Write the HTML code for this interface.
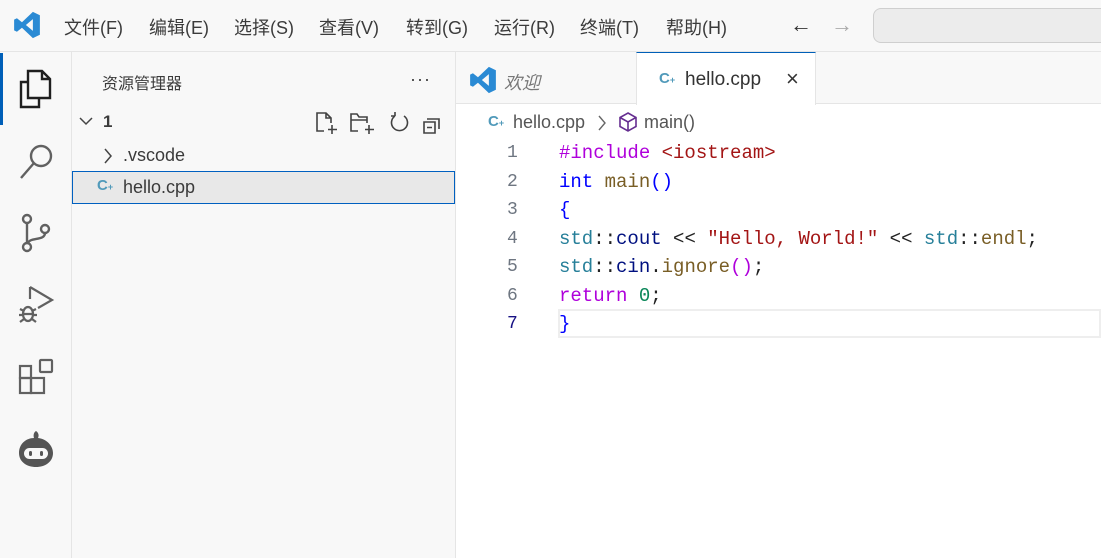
<!DOCTYPE html>
<html><head><meta charset="utf-8"><style>
*{margin:0;padding:0;box-sizing:border-box}
body{width:1101px;height:558px;overflow:hidden;background:#fff;font-family:"Liberation Sans","Noto Sans CJK SC",sans-serif;position:relative;color:#3b3b3b}
.abs{position:absolute}
#title{left:0;top:0;width:1101px;height:52px;background:#f8f8f8;border-bottom:1px solid #e5e5e5}
.menu{top:14px;font-size:18px;color:#3b3b3b}
#act{left:0;top:52px;width:72px;height:506px;background:#f8f8f8;border-right:1px solid #e5e5e5}
#side{left:72px;top:52px;width:384px;height:506px;background:#f8f8f8;border-right:1px solid #e5e5e5}
#tabs{left:456px;top:52px;width:645px;height:52px;background:#f8f8f8;border-bottom:1px solid #e5e5e5}
.code{font-family:"Liberation Mono",monospace;font-size:19px;left:559px;white-space:pre;color:#222}
.ln{font-family:"Liberation Mono",monospace;font-size:18px;left:507px;color:#6e7681}
.k{color:#af00db}.t{color:#0000ff}.f{color:#795e26}.s{color:#a31515}.n{color:#267f99}.v{color:#001080}.g{color:#098658}
</style></head><body>
<div id="title" class="abs"></div>
<svg class="abs" style="left:13px;top:11px" width="28" height="28" viewBox="0 0 100 100"><path d="M71 3 L96 15 V85 L71 97 L32 60 L14 74 L4 69 V31 L14 26 L32 40 Z M71 29 L46 50 L71 71 Z" fill="#2a8ad4" fill-rule="evenodd"/></svg>
<div class="abs menu" style="left:64px">文件(F)</div>
<div class="abs menu" style="left:149px">编辑(E)</div>
<div class="abs menu" style="left:234px">选择(S)</div>
<div class="abs menu" style="left:319px">查看(V)</div>
<div class="abs menu" style="left:406px">转到(G)</div>
<div class="abs menu" style="left:494px">运行(R)</div>
<div class="abs menu" style="left:580px">终端(T)</div>
<div class="abs menu" style="left:666px">帮助(H)</div>
<div class="abs" style="left:790px;top:12px;font-size:22px;color:#333">←</div>
<div class="abs" style="left:831px;top:12px;font-size:22px;color:#aaa">→</div>
<div class="abs" style="left:873px;top:8px;width:240px;height:35px;background:#ececec;border:1px solid #cfcfcf;border-radius:8px"></div>

<div id="act" class="abs"></div>
<div class="abs" style="left:0;top:53px;width:3px;height:72px;background:#005fb8"></div>
<svg class="abs" style="left:18px;top:68px" width="36" height="42" viewBox="0 0 36 42" fill="none" stroke="#1f1f1f" stroke-width="2.4"><path d="M10 3 H24 L32 11 V30 H10 Z M24 3 V11 H32"/><path d="M10 14 H3 V39 H21 V30"/></svg>
<svg class="abs" style="left:18px;top:142px" width="38" height="38" viewBox="0 0 38 38" fill="none" stroke="#616161" stroke-width="2.4"><circle cx="23" cy="14" r="10"/><path d="M16 21 L3 36"/></svg>
<svg class="abs" style="left:18px;top:213px" width="36" height="40" viewBox="0 0 36 40" fill="none" stroke="#616161" stroke-width="2.4"><circle cx="9" cy="6" r="4"/><circle cx="9" cy="34" r="4"/><circle cx="27" cy="16" r="4"/><path d="M9 10 V30 M27 20 C27 28 12 24 10 30"/></svg>
<svg class="abs" style="left:16px;top:285px" width="40" height="40" viewBox="0 0 40 40" fill="none" stroke="#616161" stroke-width="2.2"><path d="M14 2 L36 15 L22 23"/><path d="M14 2 V14"/><ellipse cx="12" cy="29" rx="5" ry="7"/><path d="M4 24 L8 26 M20 24 L16 26 M3 30 H7 M17 30 H21 M4 37 L8 34 M20 37 L16 34 M7 29 H17"/></svg>
<svg class="abs" style="left:18px;top:358px" width="36" height="38" viewBox="0 0 36 38" fill="none" stroke="#616161" stroke-width="2.2"><rect x="2" y="8" width="11" height="12"/><rect x="2" y="20" width="11" height="15"/><rect x="13" y="20" width="13" height="15"/><rect x="22" y="2" width="12" height="12" rx="1"/></svg>
<svg class="abs" style="left:17px;top:429px" width="38" height="40" viewBox="0 0 38 40"><path d="M19 2 C22 4 22 7 21 9 C30 10 36 17 36 24 C36 33 28 38 19 38 C10 38 2 33 2 24 C2 15 9 9 17 9 C16 6 17 3 19 2 Z" fill="#555"/><rect x="7" y="19" width="24" height="11" rx="5.5" fill="#f8f8f8"/><rect x="12" y="22" width="3" height="5" rx="1.5" fill="#555"/><rect x="23" y="22" width="3" height="5" rx="1.5" fill="#555"/></svg>

<div id="side" class="abs"></div>
<div class="abs" style="left:102px;top:70px;font-size:16px;color:#3b3b3b">资源管理器</div>
<div class="abs" style="left:410px;top:69px;font-size:18px;letter-spacing:1px">···</div>
<svg class="abs" style="left:79px;top:116px" width="14" height="10" viewBox="0 0 14 10" fill="none" stroke="#444" stroke-width="1.5"><path d="M1 2 L7 8 L13 2"/></svg>
<div class="abs" style="left:103px;top:112px;font-size:17px;font-weight:bold">1</div>
<svg class="abs" style="left:314px;top:110px" width="130" height="26" viewBox="0 0 130 26" fill="none" stroke="#424242" stroke-width="1.6"><path d="M10 21 H3 V3 H12 L17 8 V13 M12 3 V8 H17 M18 15 V24 M14 19.5 H23"/><path d="M44 21 H37 V4 H43 L45 7 H53 V13 M37 10 H53 M55 15 V24 M51 19.5 H60"/><path d="M90 6 A8 8 0 1 1 81 6 M81 6 V2 M81 6 H77"/><path d="M113 9 H125 V19 M110 12 H121 V23 H110 Z M113 17.5 H118"/></svg>
<svg class="abs" style="left:103px;top:148px" width="10" height="16" viewBox="0 0 10 16" fill="none" stroke="#444" stroke-width="1.5"><path d="M2 1 L8 8 L2 15"/></svg>
<div class="abs" style="left:123px;top:145px;font-size:18px">.vscode</div>
<div class="abs" style="left:72px;top:171px;width:383px;height:33px;border:1px solid #0060c0;background:#e8e8e8"></div>
<div class="abs" style="left:97px;top:177px;font-size:15px;font-weight:bold;color:#519aba">C<span style="font-size:9px">+</span></div>
<div class="abs" style="left:123px;top:177px;font-size:18px">hello.cpp</div>

<div id="tabs" class="abs"></div>
<svg class="abs" style="left:469px;top:66px" width="28" height="28" viewBox="0 0 100 100"><path d="M71 3 L96 15 V85 L71 97 L32 60 L14 74 L4 69 V31 L14 26 L32 40 Z M71 29 L46 50 L71 71 Z" fill="#2a8ad4" fill-rule="evenodd"/></svg>
<div class="abs" style="left:504px;top:69px;font-size:18px;font-style:italic;color:#777">欢迎</div>
<div class="abs" style="left:636px;top:52px;width:180px;height:53px;background:#fff;border-top:1px solid #005fb8;border-right:1px solid #e5e5e5;border-left:1px solid #e5e5e5"></div>
<div class="abs" style="left:659px;top:70px;font-size:15px;font-weight:bold;color:#519aba">C<span style="font-size:9px">+</span></div>
<div class="abs" style="left:685px;top:69px;font-size:19px;color:#333">hello.cpp</div>
<div class="abs" style="left:786px;top:66px;font-size:22px;color:#333">×</div>

<div class="abs" style="left:488px;top:113px;font-size:15px;font-weight:bold;color:#519aba">C<span style="font-size:9px">+</span></div>
<div class="abs" style="left:513px;top:112px;font-size:18px;color:#555">hello.cpp</div>
<svg class="abs" style="left:597px;top:115px" width="10" height="16" viewBox="0 0 10 16" fill="none" stroke="#666" stroke-width="1.4"><path d="M2 1 L8 8 L2 15"/></svg>
<svg class="abs" style="left:617px;top:111px" width="22" height="22" viewBox="0 0 22 22" fill="none" stroke="#652d90" stroke-width="1.6"><path d="M11 2 L19 6.5 V15.5 L11 20 L3 15.5 V6.5 Z M3 6.5 L11 11 L19 6.5 M11 11 V20"/></svg>
<div class="abs" style="left:644px;top:112px;font-size:18px;color:#555">main()</div>

<div class="abs" style="left:558px;top:309px;width:543px;height:29px;border:2px solid #eeeeee"></div>
<div class="abs ln" style="top:143px">1</div>
<div class="abs ln" style="top:172px">2</div>
<div class="abs ln" style="top:200px">3</div>
<div class="abs ln" style="top:229px">4</div>
<div class="abs ln" style="top:257px">5</div>
<div class="abs ln" style="top:286px">6</div>
<div class="abs ln" style="top:314px;color:#171184">7</div>
<div class="abs code" style="top:142px"><span class="k">#include</span> <span class="s">&lt;iostream&gt;</span></div>
<div class="abs code" style="top:171px"><span class="t">int</span> <span class="f">main</span><span class="t">()</span></div>
<div class="abs code" style="top:199px"><span class="t">{</span></div>
<div class="abs code" style="top:228px"><span class="n">std</span>::<span class="v">cout</span> &lt;&lt; <span class="s">"Hello, World!"</span> &lt;&lt; <span class="n">std</span>::<span class="f">endl</span>;</div>
<div class="abs code" style="top:256px"><span class="n">std</span>::<span class="v">cin</span>.<span class="f">ignore</span><span class="k">()</span>;</div>
<div class="abs code" style="top:285px"><span class="k">return</span> <span class="g">0</span>;</div>
<div class="abs code" style="top:313px"><span class="t">}</span></div>
</body></html>
